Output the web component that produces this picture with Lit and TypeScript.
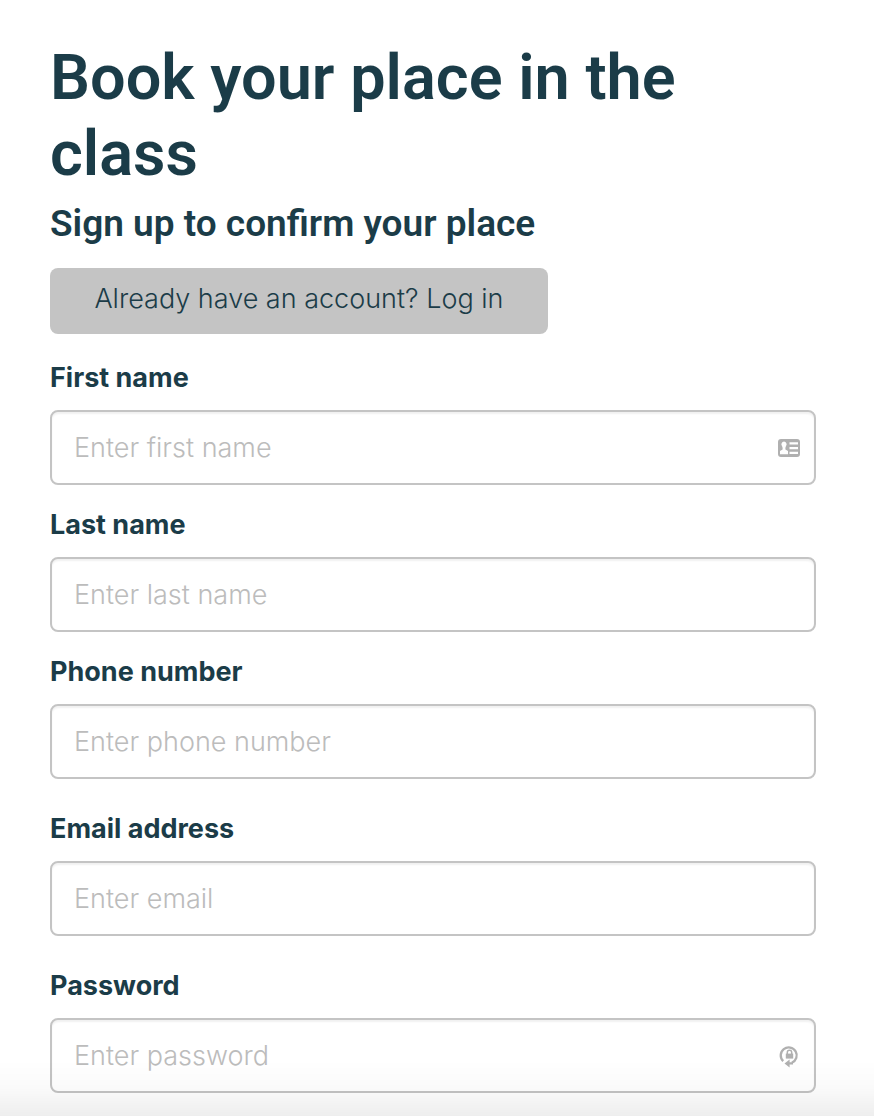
import { LitElement, html, css, svg, nothing } from "lit";
import { customElement } from "lit/decorators.js";
import { classMap } from "lit/directives/class-map.js";

interface Field {
  id: string;
  label: string;
  placeholder: string;
  type: string;
  icon?: "card" | "lock";
  roomy?: boolean;
}

const FIELDS: Field[] = [
  { id: "first-name", label: "First name", placeholder: "Enter first name", type: "text", icon: "card" },
  { id: "last-name", label: "Last name", placeholder: "Enter last name", type: "text" },
  { id: "phone", label: "Phone number", placeholder: "Enter phone number", type: "tel" },
  { id: "email", label: "Email address", placeholder: "Enter email", type: "email", roomy: true },
  { id: "password", label: "Password", placeholder: "Enter password", type: "password", icon: "lock", roomy: true },
];

const ICONS = {
  card: svg`
    <path fill-rule="evenodd" d="M4 3H20A3 3 0 0 1 23 6V18A3 3 0 0 1 20 21H4A3 3 0 0 1 1 18V6A3 3 0 0 1 4 3Z
      M7 5.6A2.7 2.7 0 0 0 5 10L5.6 11.7V13.4L3 15V18.2H11V15L8.4 13.4V11.7L9 10A2.7 2.7 0 0 0 7 5.6Z
      M12.5 6.3V8.5H21V6.3Z M12.5 11V13.2H21V11Z M12.5 15.7V17.9H21V15.7Z"/>`,
  lock: svg`
    <path d="M6.2 17.2A8 8 0 1 1 14.8 18.8" fill="none" stroke="currentColor" stroke-width="2.3"/>
    <path d="M7.5 19.5L12.6 15.6V18.2H16V20.6H12.6V23.6Z"/>
    <path d="M8.8 9.6H16.2V14.6H8.8Z"/>
    <path d="M10.3 10.5V8.4A2.2 2.2 0 0 1 14.7 8.4V10.5" fill="none" stroke="currentColor" stroke-width="1.5"/>`,
};

@customElement("app-root")
export class AppRoot extends LitElement {
  static styles = css`
    :host {
      display: block;
      min-height: 100vh;
      box-sizing: border-box;
      padding: 40px 58px 22px 50px;
      background: #fff;
      color: #1b3c48;
      font-family: Inter, "Liberation Sans", sans-serif;
      font-size: 27px;
    }
    .title,
    .subtitle {
      font-family: Roboto, Inter, sans-serif;
      font-weight: 600;
    }
    .title {
      margin: 0;
      font-size: 63px;
      line-height: 76px;
    }
    .subtitle {
      margin: 12px 0 24px;
      font-size: 37px;
      line-height: 40px;
    }
    .login {
      display: block;
      box-sizing: border-box;
      width: 65%;
      padding: 15px 20px 19px;
      border-radius: 8px;
      background: #c4c4c4;
      color: inherit;
      font-weight: 350;
      line-height: 32px;
      text-align: center;
      text-decoration: none;
    }
    .form {
      display: flex;
      flex-direction: column;
      gap: 24px;
      margin-top: 28px;
    }
    .field {
      display: grid;
      gap: 16px;
    }
    .roomy {
      margin-top: 10px;
    }
    .label {
      font-weight: 700;
      line-height: 32px;
    }
    .box {
      display: flex;
      align-items: center;
      box-sizing: border-box;
      height: 75px;
      padding: 0 13px 0 22px;
      border: 2px solid #c4c4c4;
      border-radius: 8px;
      box-shadow: inset 0 2px 2px rgba(0, 0, 0, 0.06);
    }
    .box:focus-within {
      border-color: #1b3c48;
    }
    .input {
      flex: 1;
      min-width: 0;
      height: 100%;
      padding: 0;
      border: 0;
      outline: 0;
      background: none;
      color: inherit;
      font: inherit;
    }
    .input::placeholder {
      color: #bcbcbc;
      font-weight: 300;
      opacity: 1;
    }
    .icon {
      width: 24px;
      height: 24px;
      color: #b0b0b0;
      fill: currentColor;
    }
    .fade {
      position: fixed;
      inset: auto 0 0;
      height: 56px;
      background: linear-gradient(rgba(0, 0, 0, 0), rgba(0, 0, 0, 0.02) 50%, rgba(0, 0, 0, 0.065));
      pointer-events: none;
    }
  `;

  private renderField(field: Field) {
    return html`
      <div class=${classMap({ field: true, roomy: !!field.roomy })}>
        <label class="label" for=${field.id}>${field.label}</label>
        <div class="box">
          <input class="input" id=${field.id} name=${field.id} type=${field.type} placeholder=${field.placeholder} />
          ${field.icon
            ? html`<svg class="icon" viewBox="0 0 24 24" aria-hidden="true">${ICONS[field.icon]}</svg>`
            : nothing}
        </div>
      </div>
    `;
  }

  render() {
    return html`
      <main>
        <h1 class="title">Book your place in the class</h1>
        <h2 class="subtitle">Sign up to confirm your place</h2>
        <a class="login" href="#login">Already have an account? Log in</a>
        <form class="form">${FIELDS.map((field) => this.renderField(field))}</form>
      </main>
      <div class="fade"></div>
    `;
  }
}
